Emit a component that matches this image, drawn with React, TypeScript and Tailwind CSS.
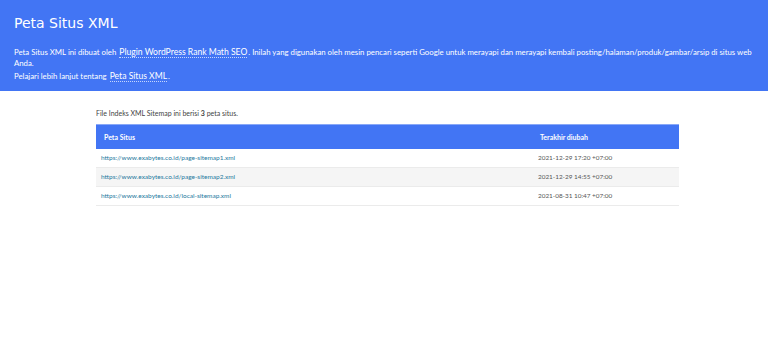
const rows = [
  { loc: "https://www.exabytes.co.id/page-sitemap1.xml", mod: "2021-12-29 17:20 +07:00" },
  { loc: "https://www.exabytes.co.id/page-sitemap2.xml", mod: "2021-12-29 14:55 +07:00" },
  { loc: "https://www.exabytes.co.id/local-sitemap.xml", mod: "2021-08-31 10:47 +07:00" },
];

export default function App() {
  return (
    <div className="min-h-[356px] bg-white font-['Lato',sans-serif] text-[#444]">
      <header className="bg-[#4275f4] px-[14px] pt-[13px] pb-[9px] text-white">
        <h1 className="font-['DejaVu_Sans',sans-serif] text-[14px] leading-[20px] mb-[14px]">
          Peta Situs XML
        </h1>
        <p className="text-[7.8px] leading-[11px] mb-[2px]">
          <span>Peta Situs XML ini dibuat oleh</span>
          <a href="#" className="inline-block ml-[3px] mr-[1px] leading-[9px] text-[8.6px] border-b border-dotted border-white/70">
            Plugin WordPress Rank Math SEO
          </a>
          <span>
            . Inilah yang digunakan oleh mesin pencari seperti Google untuk merayapi dan merayapi kembali
            posting/halaman/produk/gambar/arsip di situs web
          </span>
          <br />
          <span>Anda.</span>
        </p>
        <p className="text-[7.8px] leading-[11px]">
          <span>Pelajari lebih lanjut tentang</span>
          <a href="#" className="inline-block ml-[3px] mr-[1px] leading-[9px] text-[8.6px] border-b border-dotted border-white/70">
            Peta Situs XML
          </a>
          <span>.</span>
        </p>
      </header>

      <main className="ml-[96px] w-[583px] pt-[17px]">
        <p className="text-[7px] leading-[10px] mb-[6px]">
          File Indeks XML Sitemap ini berisi <b className="font-bold">3</b> peta situs.
        </p>
        <table className="w-full border-collapse">
          <thead>
            <tr className="bg-[#4275f4] text-white border-t border-[#89a8f7] text-[7px]">
              <th className="w-[442px] h-[24px] px-[8px] text-left font-bold">Peta Situs</th>
              <th className="pl-[2px] text-left font-bold">Terakhir diubah</th>
            </tr>
          </thead>
          <tbody>
            {rows.map((r, i) => (
              <tr key={r.loc} className={`border-b border-[#ebebeb] ${i % 2 === 1 ? "bg-[#f5f5f5]" : ""}`}>
                <td className="h-[19px] px-[5px] text-[6.5px]">
                  <a href="#" className="text-[#1e7aa0]">{r.loc}</a>
                </td>
                <td className="text-[6.4px] text-[#555]">{r.mod}</td>
              </tr>
            ))}
          </tbody>
        </table>
      </main>
    </div>
  );
}
